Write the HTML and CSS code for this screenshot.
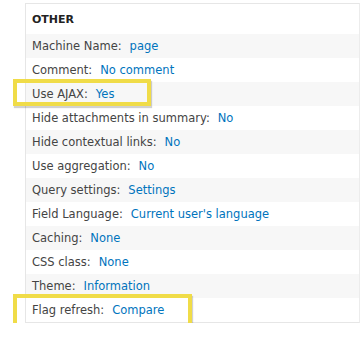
FILE: index.html
```html
<!DOCTYPE html>
<html lang="en">
<head>
  <meta charset="UTF-8">
  <title>Views - Other settings</title>
  <link rel="stylesheet" href="styles.css">
</head>
<body>
  <div class="views-panel">
    <h3 class="panel-title">OTHER</h3>
    <div class="setting odd"><span class="label">Machine Name:</span><a href="#">page</a></div>
    <div class="setting"><span class="label">Comment:</span><a href="#">No comment</a></div>
    <div class="setting odd">
      <span class="label">Use AJAX:</span><a href="#">Yes</a>
      <span class="callout callout-ajax"></span>
    </div>
    <div class="setting"><span class="label">Hide attachments in summary:</span><a href="#">No</a></div>
    <div class="setting odd"><span class="label">Hide contextual links:</span><a href="#">No</a></div>
    <div class="setting"><span class="label">Use aggregation:</span><a href="#">No</a></div>
    <div class="setting odd"><span class="label">Query settings:</span><a href="#">Settings</a></div>
    <div class="setting"><span class="label">Field Language:</span><a href="#">Current user's language</a></div>
    <div class="setting odd"><span class="label">Caching:</span><a href="#">None</a></div>
    <div class="setting"><span class="label">CSS class:</span><a href="#">None</a></div>
    <div class="setting odd"><span class="label">Theme:</span><a href="#">Information</a></div>
    <div class="setting">
      <span class="label">Flag refresh:</span><a href="#">Compare</a>
      <span class="callout callout-flag"></span>
    </div>
  </div>
</body>
</html>
```

FILE: styles.css
```css
body {
  margin: 0;
  font-family: "DejaVu Sans", Verdana, sans-serif;
  font-size: 11.5px;
  background: #fff;
  color: #444;
}
.views-panel {
  margin: 3px 2px 0 25px;
  border: 1px solid #e6e6e6;
  border-right-color: #ececec;
  background: #fff;
}
.panel-title {
  margin: 0;
  height: 30px;
  line-height: 31px;
  padding-left: 6px;
  font-size: 11px;
  font-weight: bold;
  color: #222;
}
.setting {
  position: relative;
  height: 24px;
  line-height: 24px;
  padding-left: 6px;
  white-space: nowrap;
}
.setting.odd {
  background: #f7f7f7;
}
.label {
  margin-right: 8px;
  color: #444;
}
.setting a {
  color: #0074bd;
  text-decoration: none;
}
.callout {
  position: absolute;
  left: -13px;
  border: 4px solid #f0dc48;
  box-shadow: 1px 2px 1px rgba(0, 0, 0, 0.18);
  pointer-events: none;
}
.callout-ajax {
  top: -3px;
  width: 130px;
  height: 19px;
}
.callout-flag {
  top: -4px;
  width: 171px;
  height: 28px;
}
```
